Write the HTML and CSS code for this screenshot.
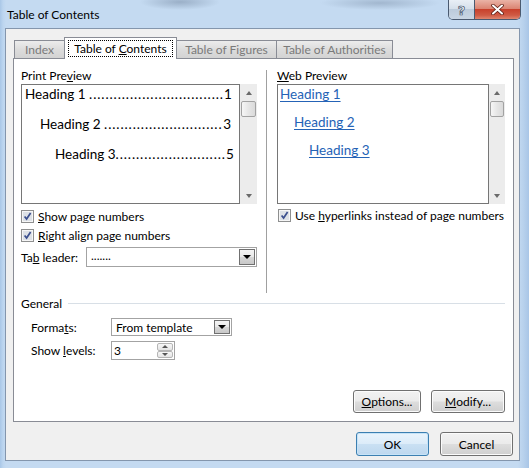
FILE: index.html
```html
<!DOCTYPE html>
<html>
<head>
<meta charset="utf-8">
<title>Table of Contents</title>
<link rel="stylesheet" href="styles.css">
</head>
<body>
<div class="window">
  <div class="titlebar">
    <span class="title">Table of Contents</span>
    <div class="caption-btns">
      <div class="cbtn help">?</div>
      <div class="cbtn close">
        <svg width="13" height="11" viewBox="0 0 13 11"><path d="M2 1.5 L11 9.5 M11 1.5 L2 9.5" stroke="#5b1e14" stroke-width="3.6" stroke-linecap="round"/><path d="M2 1.5 L11 9.5 M11 1.5 L2 9.5" stroke="#ffffff" stroke-width="2" stroke-linecap="round"/></svg>
      </div>
    </div>
  </div>
  <div class="client">
    <div class="tabs">
      <div class="tab t-index">Index</div>
      <div class="tab active t-toc"><span class="focus">Table of <u>C</u>ontents</span></div>
      <div class="tab t-fig">Table of Figures</div>
      <div class="tab t-auth">Table of Authorities</div>
    </div>
    <div class="panel">
      <div class="top">
        <div class="col left">
          <div class="lbl">Print Pre<u>v</u>iew</div>
          <div class="preview-row">
            <div class="preview print">
              <div class="toc l1"><span>Heading 1&nbsp;</span><span class="dots">.................................</span><span class="pg">1</span></div>
              <div class="toc l2"><span>Heading 2&nbsp;</span><span class="dots">.............................</span><span class="pg">3</span></div>
              <div class="toc l3"><span>Heading 3</span><span class="dots">...........................</span><span class="pg">5</span></div>
            </div>
            <div class="vscroll wide">
              <div class="sarrow"><i class="tri-up"></i></div>
              <div class="thumb"></div>
              <div class="sfill"></div>
              <div class="sarrow"><i class="tri-down"></i></div>
            </div>
          </div>
          <div class="chk chk-first">
            <svg class="cb" width="13" height="13" viewBox="0 0 13 13"><rect x=".5" y=".5" width="12" height="12" fill="#f6f6f6" stroke="#8e8f8f"/><rect x="2" y="2" width="9" height="9" fill="#dde1e6"/><path d="M3.6 6.4 L5.6 9 L9.6 3" fill="none" stroke="#3b4f8e" stroke-width="1.7"/></svg>
            <span><u>S</u>how page numbers</span>
          </div>
          <div class="chk">
            <svg class="cb" width="13" height="13" viewBox="0 0 13 13"><rect x=".5" y=".5" width="12" height="12" fill="#f6f6f6" stroke="#8e8f8f"/><rect x="2" y="2" width="9" height="9" fill="#dde1e6"/><path d="M3.6 6.4 L5.6 9 L9.6 3" fill="none" stroke="#3b4f8e" stroke-width="1.7"/></svg>
            <span><u>R</u>ight align page numbers</span>
          </div>
          <div class="leader-row">
            <span class="leader-lab">Ta<u>b</u> leader:</span>
            <div class="combo leader">
              <span class="val">.......</span>
              <div class="drop"><i class="tri-black"></i></div>
            </div>
          </div>
        </div>
        <div class="vsep"></div>
        <div class="col right">
          <div class="lbl"><u>W</u>eb Preview</div>
          <div class="preview-row">
            <div class="preview web">
              <div class="wl w1">Heading 1</div>
              <div class="wl w2">Heading 2</div>
              <div class="wl w3">Heading 3</div>
            </div>
            <div class="vscroll">
              <div class="sarrow"><i class="tri-up"></i></div>
              <div class="thumb"></div>
              <div class="sfill"></div>
              <div class="sarrow"><i class="tri-down"></i></div>
            </div>
          </div>
          <div class="chk chk-first chk-web">
            <svg class="cb" width="13" height="13" viewBox="0 0 13 13"><rect x=".5" y=".5" width="12" height="12" fill="#f6f6f6" stroke="#8e8f8f"/><rect x="2" y="2" width="9" height="9" fill="#dde1e6"/><path d="M3.6 6.4 L5.6 9 L9.6 3" fill="none" stroke="#3b4f8e" stroke-width="1.7"/></svg>
            <span>Use <u>h</u>yperlinks instead of page numbers</span>
          </div>
        </div>
      </div>
      <div class="general-head">General</div>
      <div class="frow first">
        <span class="flab">Forma<u>t</u>s:</span>
        <div class="combo formats">
          <span class="val">From template</span>
          <div class="drop"><i class="tri-black"></i></div>
        </div>
      </div>
      <div class="frow second">
        <span class="flab">Show <u>l</u>evels:</span>
        <div class="spin">
          <span class="val">3</span>
          <div class="spinbtns">
            <div class="sb"><i class="tri-sm-up"></i></div>
            <div class="sb"><i class="tri-sm-down"></i></div>
          </div>
        </div>
      </div>
      <div class="panel-btns">
        <div class="btn b-options"><u>O</u>ptions...</div>
        <div class="btn b-modify"><u>M</u>odify...</div>
      </div>
    </div>
    <div class="dialog-btns">
      <div class="btn default b-ok">OK</div>
      <div class="btn b-cancel">Cancel</div>
    </div>
  </div>
</div>
</body>
</html>
```

FILE: styles.css
```css
* { box-sizing: border-box; }

html, body {
  margin: 0;
  padding: 0;
  background: #b9d2ec;
}

body {
  font-family: Lato, "Liberation Sans", sans-serif;
  font-size: 12px;
  color: #000;
}

u { text-decoration: underline; text-underline-offset: 1px; }

.window {
  width: 529px;
  height: 468px;
  display: flex;
  flex-direction: column;
  overflow: hidden;
  background:
    radial-gradient(ellipse 40px 8px at 180px 2px, rgba(120,140,165,0.55), rgba(120,140,165,0) 100%),
    radial-gradient(ellipse 60px 7px at 380px 3px, rgba(120,140,165,0.45), rgba(120,140,165,0) 100%),
    linear-gradient(to right, #a9c7e7 0, #bcd5ef 3px, #c4daf1 6px, #c4daf1 518px, #b6d0ec 524px, #a8c5e6 529px);
}

.titlebar {
  height: 28px;
  display: flex;
  align-items: flex-start;
  flex: none;
}

.title {
  padding: 7px 0 0 7px;
  line-height: 16px;
  font-size: 12px;
}

.caption-btns {
  margin-left: auto;
  margin-right: 8px;
  display: flex;
  height: 20px;
  border: 1px solid #4a5a70;
  border-top: none;
  border-radius: 0 0 5px 5px;
  overflow: hidden;
}

.cbtn {
  height: 100%;
  display: flex;
  align-items: center;
  justify-content: center;
}

.help {
  width: 26px;
  border-right: 1px solid #4a5a70;
  background: linear-gradient(#e9eff6 0%, #d6e0eb 45%, #bccbdb 50%, #c9d6e4 100%);
  color: #eef2f7;
  font-family: "DejaVu Sans", sans-serif;
  font-size: 13px;
  font-weight: bold;
  -webkit-text-stroke: 0.7px #44546a;
  padding-top: 1px;
}

.close {
  width: 45px;
  background: linear-gradient(#eab3a6 0%, #db8573 45%, #c8412c 50%, #cf5a44 80%, #e0866f 100%);
}

.client {
  margin-left: 5px;
  width: 515px;
  height: 433px;
  flex: none;
  border: 1px solid #8496ad;
  background: #f0f0f0;
  display: flex;
  flex-direction: column;
  padding-top: 8px;
}

/* Tabs */
.tabs {
  display: flex;
  align-items: flex-end;
  height: 21px;
  margin-left: 7px;
  padding-left: 1px;
}

.tab {
  height: 18px;
  border: 1px solid #898c95;
  border-bottom: none;
  background: linear-gradient(#ececec, #dcdcdc 50%, #d3d3d3);
  color: #7a7a7a;
  text-align: center;
  line-height: 17px;
  white-space: nowrap;
}

.tab + .tab { margin-left: -1px; }

.t-index { width: 51px; }
.t-toc { width: 113px; }
.t-fig { width: 101px; }
.t-auth { width: 117px; }

.tab.active {
  height: 22px;
  margin-bottom: -1px;
  background: #fff;
  color: #000;
  position: relative;
  z-index: 1;
  padding-top: 2px;
}

.focus {
  display: block;
  margin: 0 3px;
  border: 1px dotted #000;
  line-height: 15px;
}

/* Panel */
.panel {
  margin-left: 7px;
  width: 501px;
  height: 364px;
  flex: none;
  border: 1px solid #898c95;
  background: #fff;
  padding: 9px 8px 8px 7px;
  display: flex;
  flex-direction: column;
}

.top {
  display: flex;
  height: 225px;
  flex: none;
}

.col { display: flex; flex-direction: column; }
.col.left { width: 236px; }
.col.right { width: 228px; margin-left: 10px; }

.vsep {
  width: 1px;
  margin-left: 9px;
  margin-top: 2px;
  background: #a0a0a0;
}

.lbl {
  line-height: 15px;
  height: 15px;
  margin-bottom: 1px;
}

.preview-row {
  display: flex;
  height: 120px;
}

.preview {
  flex: 1;
  border: 1px solid #767676;
  background: #fff;
  overflow: hidden;
  font-size: 13.5px;
}

.preview.print { padding: 0 8px 0 3px; }

.toc {
  display: flex;
  white-space: nowrap;
  line-height: 19px;
  height: 19px;
  margin-bottom: 11px;
}

.toc .dots {
  flex: none;
  letter-spacing: 0.9px;
}

.toc .pg { margin-left: auto; }

.toc.l2 { padding-left: 15px; }
.toc.l3 { padding-left: 30px; }

.preview.web { padding-left: 2px; }

.wl {
  line-height: 18px;
  height: 18px;
  margin-bottom: 10px;
  color: #2563b6;
  text-decoration: underline;
  text-underline-offset: 2px;
}

.wl.w2 { padding-left: 14px; }
.wl.w3 { padding-left: 29px; }

.vscroll {
  width: 16px;
  background: #ececec;
  display: flex;
  flex-direction: column;
}

.vscroll.wide { width: 17px; }

.sarrow {
  height: 17px;
  display: flex;
  align-items: center;
  justify-content: center;
}

.thumb {
  height: 16px;
  margin: 0 1px;
  border: 1px solid #a2a2a2;
  border-radius: 2px;
  background: linear-gradient(to right, #f6f6f6, #e6e6e6 50%, #dadada);
}

.sfill { flex: 1; }

.tri-up, .tri-down, .tri-black, .tri-sm-up, .tri-sm-down {
  display: block;
  width: 0;
  height: 0;
}

.tri-up {
  border-left: 3.5px solid transparent;
  border-right: 3.5px solid transparent;
  border-bottom: 4px solid #6a6a6a;
}

.tri-down {
  border-left: 3.5px solid transparent;
  border-right: 3.5px solid transparent;
  border-top: 4px solid #6a6a6a;
}

/* checkboxes */
.chk {
  display: flex;
  align-items: center;
  height: 19px;
  gap: 4px;
  white-space: nowrap;
}

.chk-first { margin-top: 3px; }
.chk-web { margin-top: 2px; padding-left: 1px; }

.cb { flex: none; display: block; }

/* combo */
.leader-row {
  display: flex;
  align-items: center;
  margin-top: 2px;
  height: 20px;
}

.leader-lab { width: 65px; }

.combo {
  display: flex;
  align-items: stretch;
  border: 1px solid #a3a3a3;
  background: #fff;
  padding: 1px;
}

.combo .val {
  flex: 1;
  display: flex;
  align-items: center;
  white-space: nowrap;
}

.combo.leader {
  width: 171px;
  height: 20px;
}

.combo.leader .val { padding-left: 3px; padding-bottom: 3px; }

.drop {
  width: 16px;
  border: 1px solid #707070;
  background: linear-gradient(#f4f4f4, #e8e8e8 50%, #d6d6d6 52%, #c8c8c8);
  display: flex;
  align-items: center;
  justify-content: center;
}

.tri-black {
  border-left: 4px solid transparent;
  border-right: 4px solid transparent;
  border-top: 4px solid #000;
}

/* General */
.general-head {
  display: flex;
  align-items: center;
  margin-top: 3px;
  line-height: 15px;
  height: 15px;
}

.general-head::after {
  content: "";
  flex: 1;
  height: 1px;
  margin-left: 6px;
  background: #d8dfe6;
}

.frow {
  display: flex;
  align-items: center;
  padding-left: 10px;
}

.frow.first { margin-top: 7px; }
.frow.second { margin-top: 5px; }

.flab { width: 80px; }

.combo.formats {
  width: 121px;
  height: 18px;
}

.combo.formats .val { padding-left: 3px; }

.spin {
  display: flex;
  width: 64px;
  height: 19px;
  border: 1px solid #a3a3a3;
  background: #fff;
  padding: 1px;
}

.spin .val {
  flex: 1;
  padding-left: 1px;
  line-height: 15px;
}

.spinbtns {
  width: 16px;
  display: flex;
  flex-direction: column;
}

.sb {
  flex: 1;
  border: 1px solid #b5b5b5;
  border-radius: 2px;
  background: linear-gradient(#f7f7f7, #e4e4e4);
  display: flex;
  align-items: center;
  justify-content: center;
}

.tri-sm-up {
  border-left: 3px solid transparent;
  border-right: 3px solid transparent;
  border-bottom: 3px solid #555;
}

.tri-sm-down {
  border-left: 3px solid transparent;
  border-right: 3px solid transparent;
  border-top: 3px solid #555;
}

/* Buttons */
.btn {
  display: flex;
  align-items: center;
  justify-content: center;
  border: 1px solid #707070;
  border-radius: 3px;
  background: linear-gradient(#f2f2f2 0%, #ebebeb 48%, #dddddd 52%, #cfcfcf 100%);
  box-shadow: inset 0 0 0 1px #fbfbfb;
  white-space: nowrap;
}

.panel-btns {
  margin-top: auto;
  display: flex;
  justify-content: flex-end;
  gap: 10px;
}

.b-options { width: 68px; height: 23px; }
.b-modify { width: 74px; height: 23px; }

.dialog-btns {
  display: flex;
  justify-content: flex-end;
  gap: 11px;
  margin-top: 10px;
  padding-right: 6px;
}

.b-ok, .b-cancel { width: 73px; height: 24px; }

.btn.default {
  border-color: #3c7fb1;
  background: linear-gradient(#eaf4fc 0%, #dcecf9 48%, #c9e0f3 52%, #bdd7ee 100%);
  box-shadow: inset 0 0 0 1px #c6e3f7;
}
```
